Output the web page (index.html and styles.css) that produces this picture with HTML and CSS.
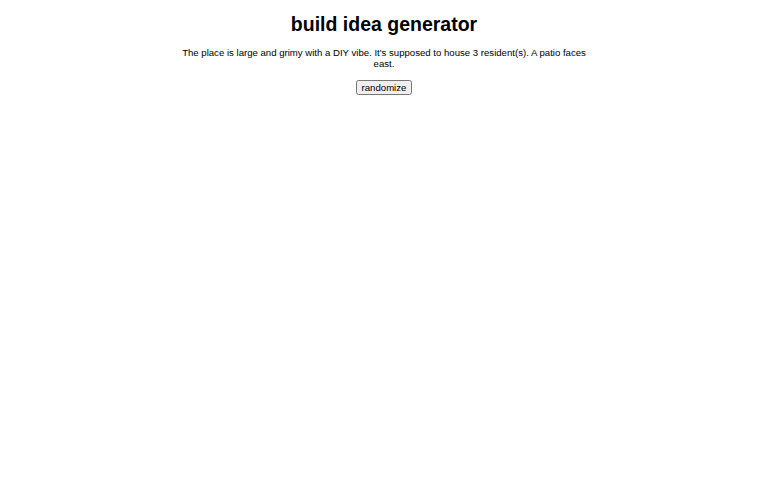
FILE: index.html
```html
<!DOCTYPE html>
<html lang="en">
<head>
    <meta charset="UTF-8">
    <meta name="viewport" content="width=device-width, initial-scale=1.0">
    <title>build idea generator</title>
    <link rel="stylesheet" href="styles.css">
</head>
<body>
    <div class="app">
        <h1 class="title">build idea generator</h1>
        <p class="idea">The place is large and grimy with a DIY vibe. It's supposed to house 3 resident(s). A patio faces east.</p>
        <button class="randomize">randomize</button>
    </div>
</body>
</html>
```

FILE: styles.css
```css
body {
    margin: 8px;
    font-family: "Liberation Sans", Arial, sans-serif;
    background: #fff;
    color: #000;
}

.app {
    display: flex;
    flex-direction: column;
    align-items: center;
    text-align: center;
}

.title {
    font-size: 19.5px;
    margin: 5px 0 10px;
}

.idea {
    font-size: 9.6px;
    line-height: 11px;
    max-width: 404px;
    margin: 1px 0 11px;
}

.randomize {
    font-family: "Liberation Sans", Arial, sans-serif;
    font-size: 9.6px;
    padding: 0 4px;
}
```
